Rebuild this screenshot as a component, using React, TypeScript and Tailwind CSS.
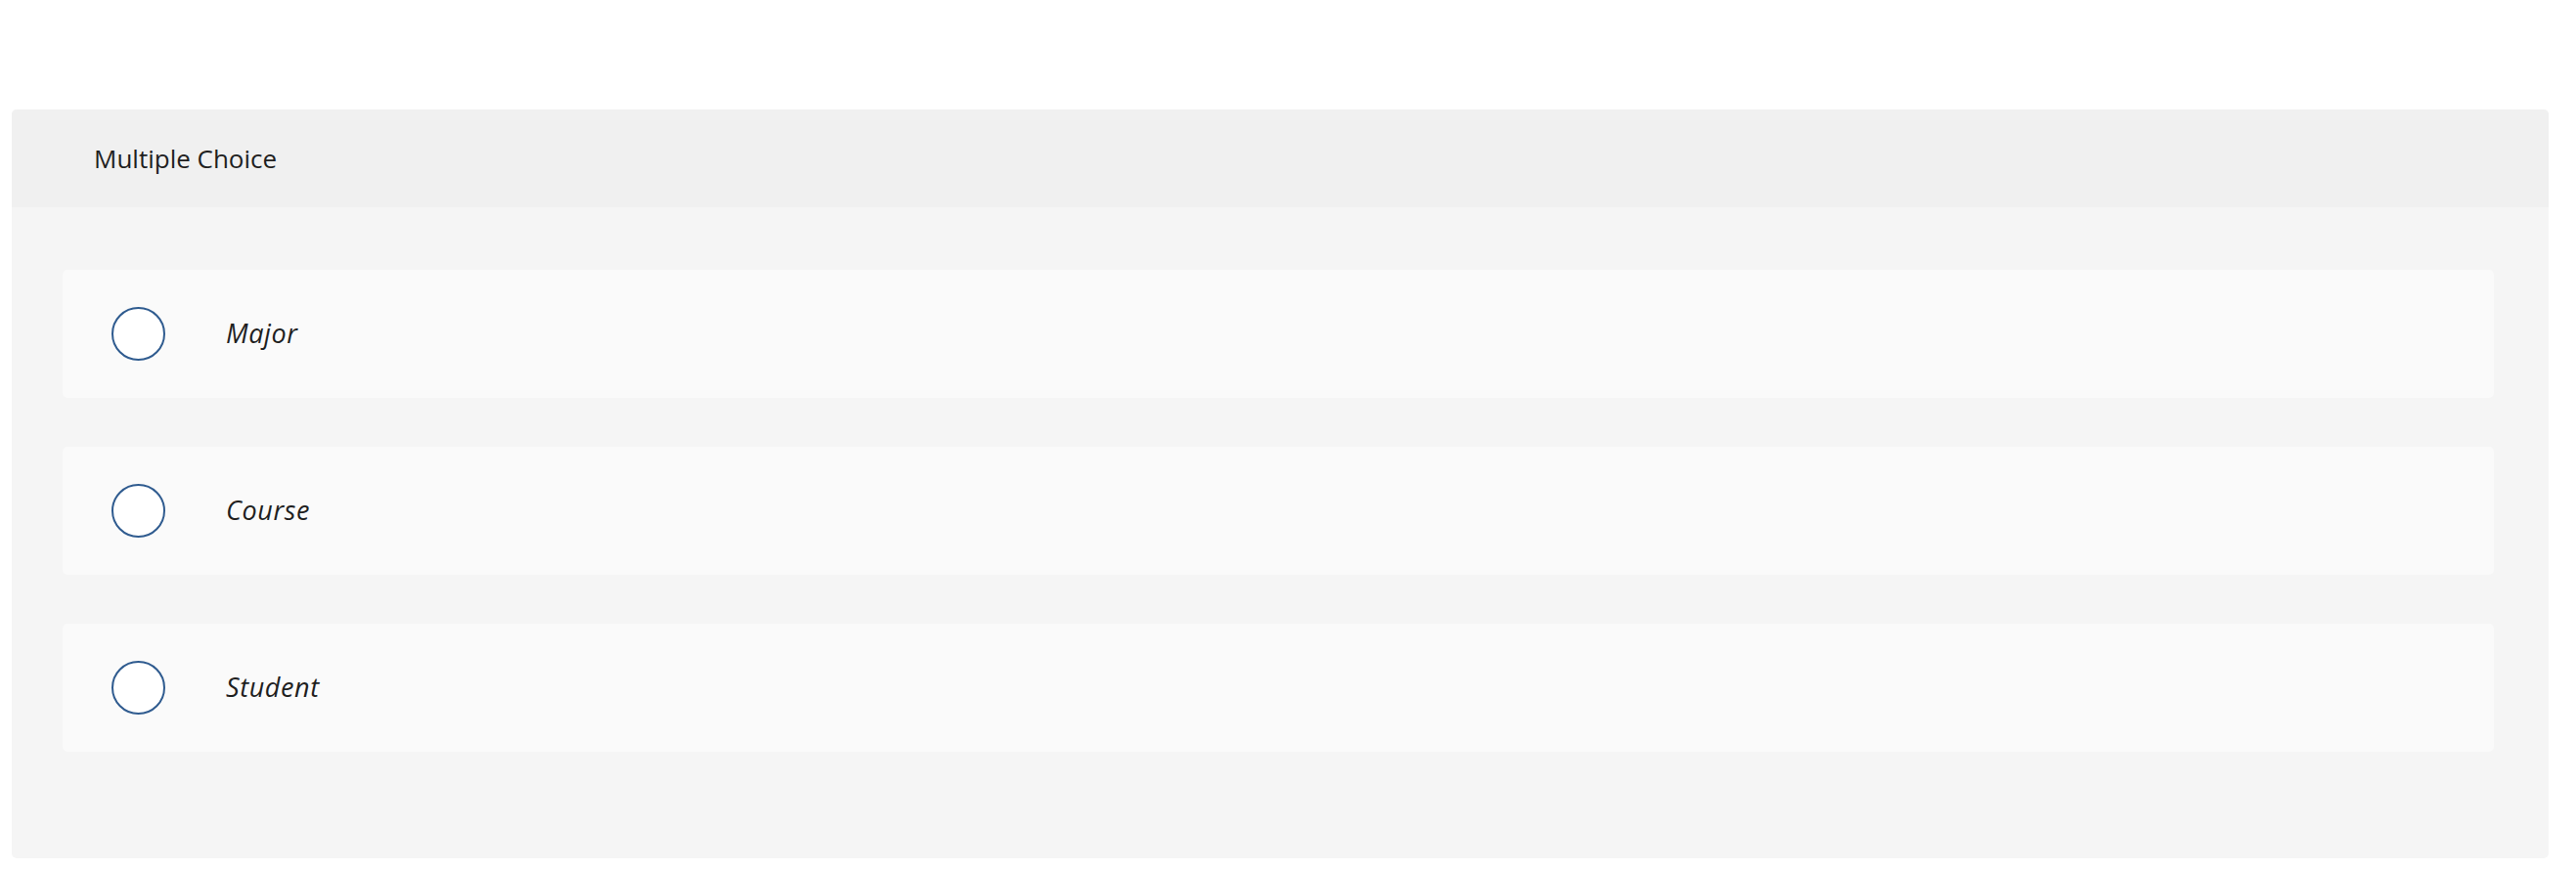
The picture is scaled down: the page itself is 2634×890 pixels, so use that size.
const options = ["Major", "Course", "Student"];

export default function App() {
  return (
    <div className="min-h-screen bg-white pt-[112px] pl-[12px] pr-[28px] font-['Open_Sans',sans-serif]">
      <div className="rounded-[5px] bg-[#f5f5f5] overflow-hidden">
        <div className="h-[100px] bg-[#f0f0f0] flex items-center pl-[84px]">
          <h2 className="text-[26px] text-[#1f1f1f]">Multiple Choice</h2>
        </div>
        <div className="pt-[64px] pb-[109px] pl-[52px] pr-[56px] flex flex-col gap-[50px]">
          {options.map((opt) => (
            <label
              key={opt}
              className="h-[131px] rounded-[5px] bg-[#fafafa] flex items-center pl-[50px] cursor-pointer"
            >
              <span className="w-[55px] h-[55px] rounded-full border-2 border-[#2f5b8f] bg-white shrink-0" />
              <span className="ml-[62px] text-[27px] italic tracking-[0.6px] text-[#1f1f1f]">{opt}</span>
            </label>
          ))}
        </div>
      </div>
    </div>
  );
}
